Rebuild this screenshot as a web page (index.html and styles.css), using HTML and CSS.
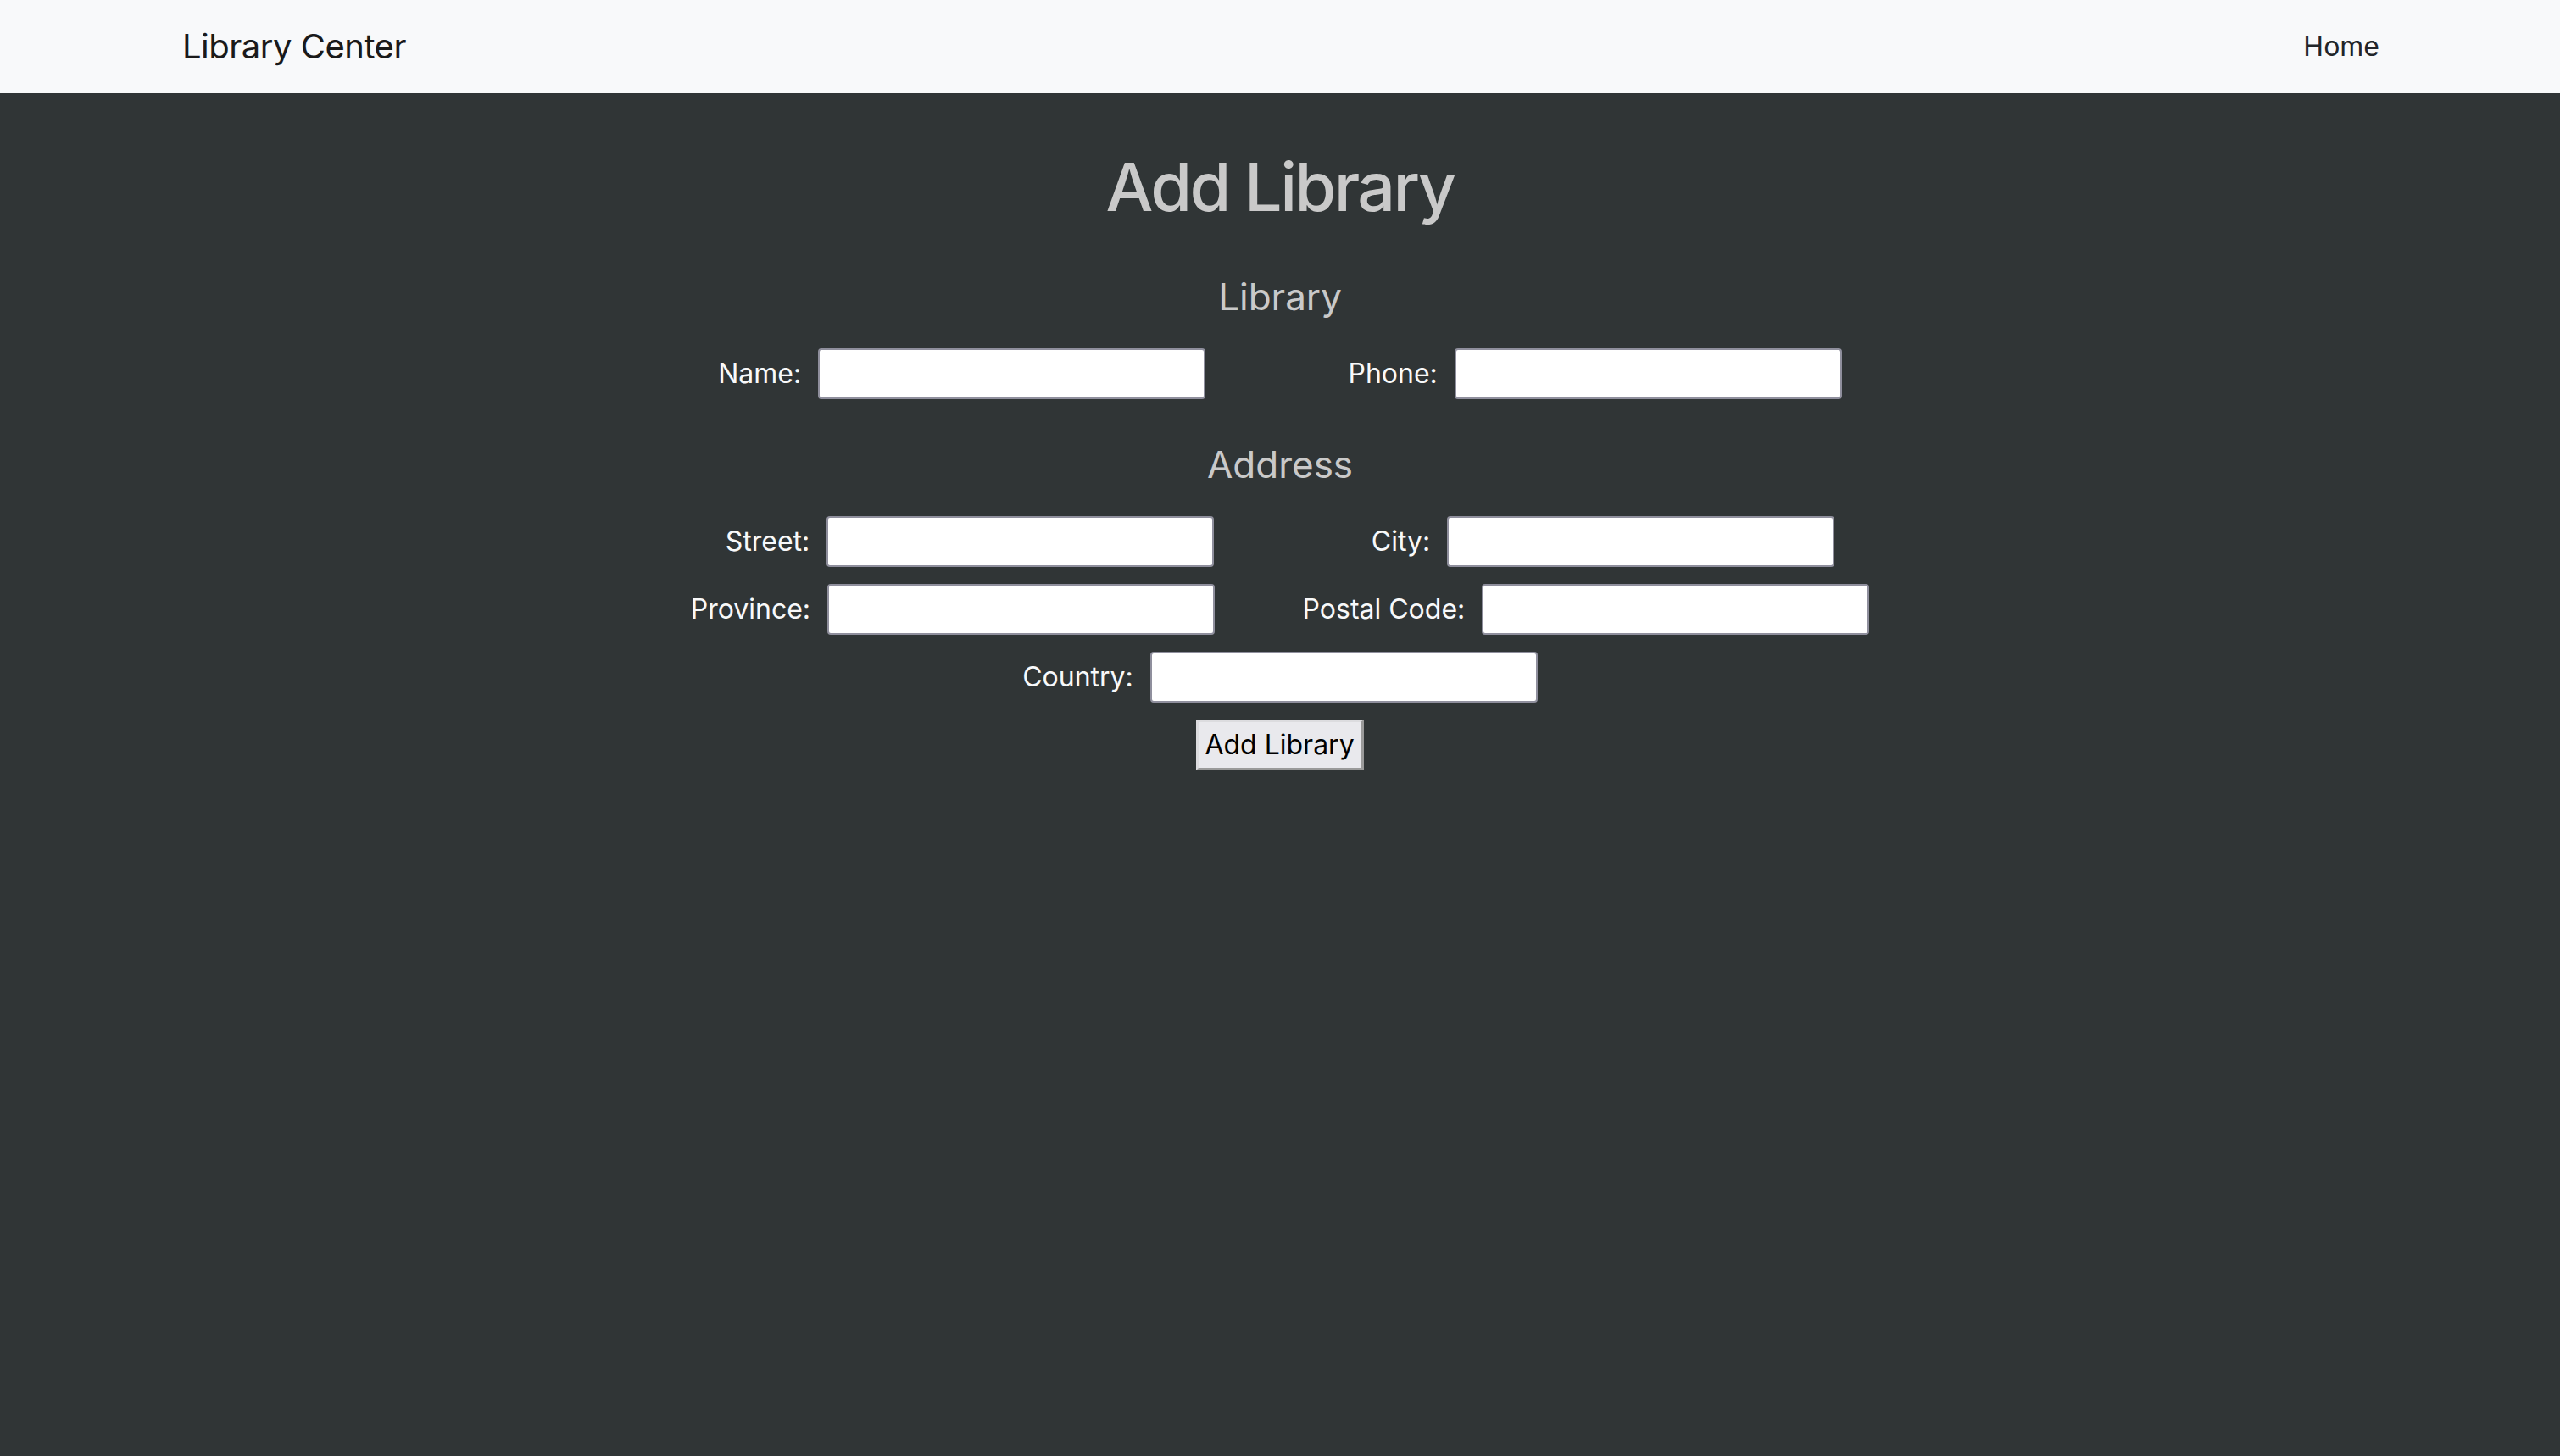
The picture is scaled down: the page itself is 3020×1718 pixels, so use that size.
FILE: index.html
```html
<!DOCTYPE html>
<html lang="en">
<head>
<meta charset="utf-8">
<title>Library Center - Add Library</title>
<link rel="stylesheet" href="styles.css">
</head>
<body>
<nav class="navbar">
  <a class="brand" href="#">Library Center</a>
  <a class="nav-link" href="#">Home</a>
</nav>
<main class="main">
  <h1 class="title">Add Library</h1>
  <form class="form">
    <h2 class="section-title section-first">Library</h2>
    <div class="row">
      <div class="field"><label class="label">Name:</label><input class="input" type="text"></div>
      <div class="field"><label class="label">Phone:</label><input class="input" type="text"></div>
    </div>
    <h2 class="section-title">Address</h2>
    <div class="row">
      <div class="field"><label class="label">Street:</label><input class="input" type="text"></div>
      <div class="field"><label class="label">City:</label><input class="input" type="text"></div>
    </div>
    <div class="row">
      <div class="field"><label class="label">Province:</label><input class="input" type="text"></div>
      <div class="field"><label class="label">Postal Code:</label><input class="input" type="text"></div>
    </div>
    <div class="row">
      <div class="field"><label class="label">Country:</label><input class="input" type="text"></div>
    </div>
    <div class="row">
      <button class="button" type="button">Add Library</button>
    </div>
  </form>
</main>
</body>
</html>
```

FILE: styles.css
```css
html, body {
  margin: 0;
  padding: 0;
}

body {
  background: #303536;
  font-family: Inter, "Liberation Sans", sans-serif;
  min-height: 100vh;
}

.navbar {
  height: 110px;
  background: #f8f9fa;
  display: flex;
  align-items: center;
  justify-content: space-between;
  padding: 0 213px 0 215px;
  box-sizing: border-box;
}

.brand {
  font-size: 40px;
  line-height: 60px;
  letter-spacing: -0.5px;
  color: #1a1a1a;
  text-decoration: none;
}

.nav-link {
  font-size: 32px;
  line-height: 48px;
  color: #212529;
  text-decoration: none;
}

.main {
  padding-top: 62px;
}

.title {
  margin: 0;
  font-size: 79px;
  line-height: 96px;
  letter-spacing: -2.6px;
  font-weight: 500;
  color: #c9c9c9;
  text-align: center;
}

.form {
  width: 1494px;
  margin: 0 auto;
}

.section-title {
  margin: 51px 0 34px;
  font-size: 44px;
  line-height: 52.8px;
  font-weight: 400;
  color: #c9c9c9;
  text-align: center;
}

.section-first {
  margin-top: 56px;
}

.row {
  display: flex;
  justify-content: space-around;
  align-items: center;
  height: 60px;
  margin-bottom: 20px;
}

.field {
  display: flex;
  align-items: center;
}

.label {
  font-size: 32px;
  line-height: 48px;
  color: #f8f9fa;
  margin-right: 20px;
}

.input {
  box-sizing: border-box;
  width: 457px;
  height: 60px;
  border: 2px solid #8f8f9d;
  border-radius: 4px;
  background: #ffffff;
  padding: 0 4px;
  font-size: 32px;
  font-family: inherit;
}

.button {
  box-sizing: border-box;
  width: 198px;
  height: 60px;
  padding: 0;
  background: #e9e9ed;
  border-style: solid;
  border-width: 3px 4px 3px 3px;
  border-color: #dcdcdf #9a9a9a #9a9a9a #dcdcdf;
  border-radius: 0;
  font-family: inherit;
  font-size: 32px;
  color: #000000;
}
```
